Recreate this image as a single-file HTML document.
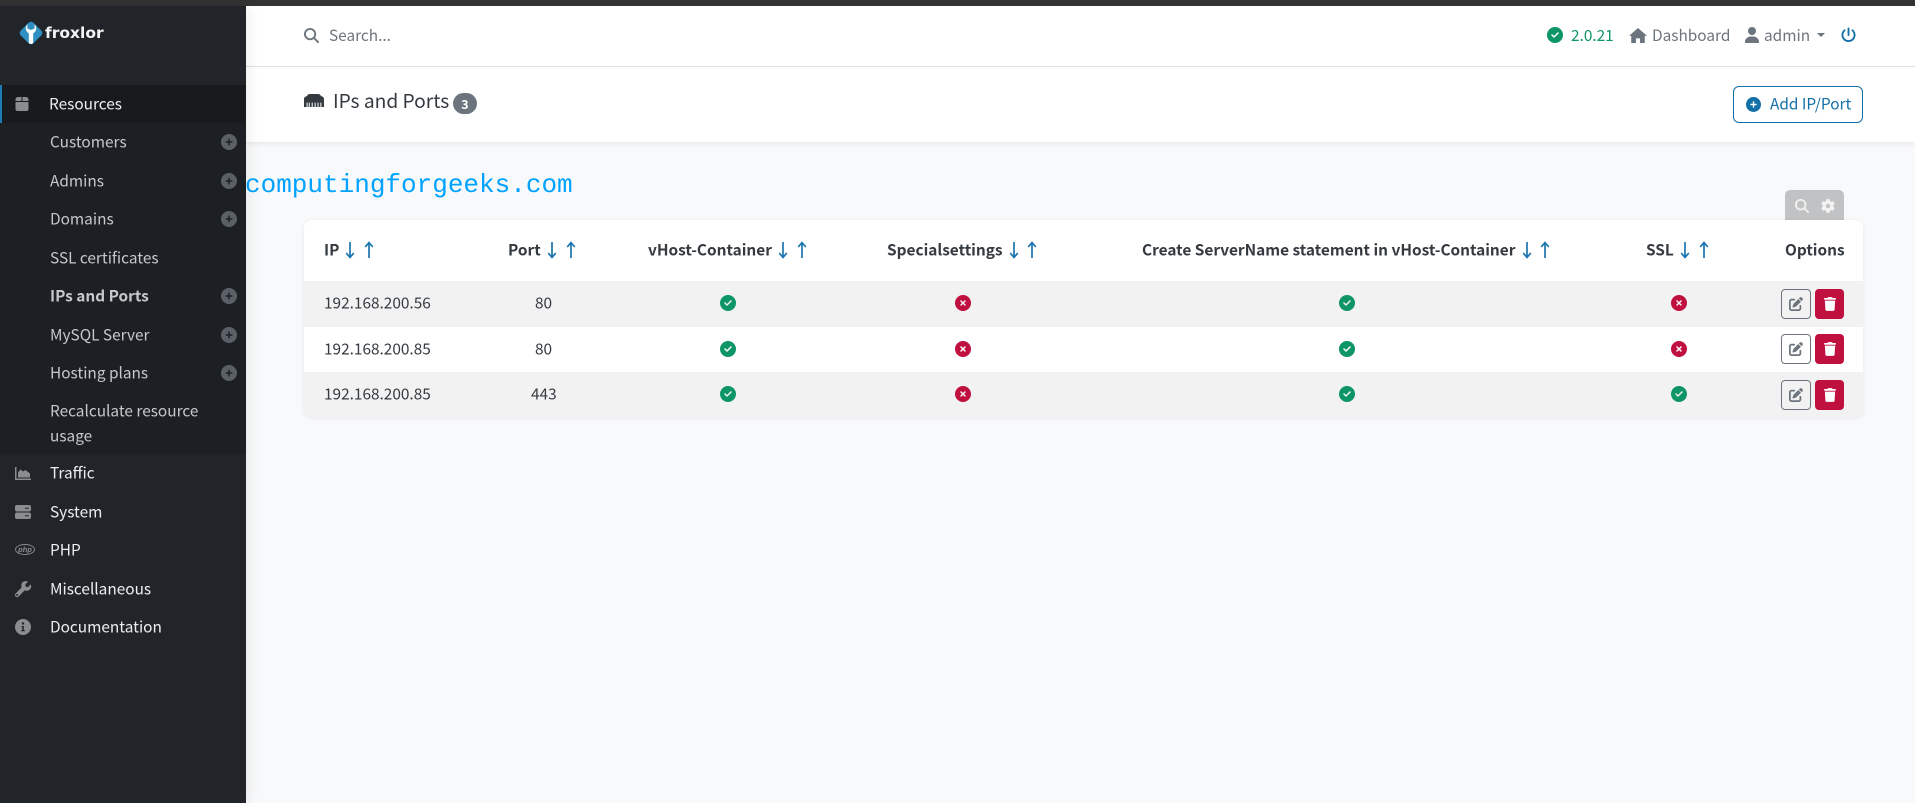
<!DOCTYPE html>
<html lang="en"><head><meta charset="utf-8"><title>IPs and Ports - Froxlor</title>
<style>
*{box-sizing:border-box}
html,body{margin:0;padding:0;width:1915px;height:803px;overflow:hidden;background:#f8f9fa}
body{position:relative;font-family:"Noto Sans CJK JP","Liberation Sans",sans-serif;font-size:15.4px;color:#212529}
.a{position:absolute}
.t{position:absolute;white-space:nowrap;line-height:24px;height:24px}
svg.i{position:absolute;display:block;overflow:visible}
.side{position:absolute;left:0;top:6px;width:246px;height:797px;background:#212529;box-shadow:0 0 14px rgba(0,0,0,.1)}
.sub{color:#c6c8ca;transform:translateY(.5px)}
.main{color:#eceeef;transform:translateY(.5px)}
.th{font-weight:700;color:#343a40;transform:translateY(.5px)}
.td{color:#343a40;transform:translateY(.5px)}
.ed{position:absolute;left:1781px;width:30px;height:30px;border:1px solid #6c757d;border-radius:4px}
.de{position:absolute;left:1815px;width:29px;height:30px;background:#bf1040;border-radius:4px}
</style></head><body>
<svg width="0" height="0" style="position:absolute"><defs>
<symbol id="chk" viewBox="0 0 512 512"><path d="M256 512A256 256 0 1 0 256 0a256 256 0 1 0 0 512zM369 209L241 337c-9.4 9.4-24.6 9.4-33.9 0l-64-64c-9.4-9.4-9.4-24.6 0-33.9s24.6-9.4 33.9 0l47 47L335 175c9.4-9.4 24.6-9.4 33.9 0s9.4 24.6 0 33.9z"/></symbol>
<symbol id="xm" viewBox="0 0 512 512"><path d="M256 512A256 256 0 1 0 256 0a256 256 0 1 0 0 512zM175 175c9.4-9.4 24.6-9.4 33.9 0l47 47 47-47c9.4-9.4 24.6-9.4 33.9 0s9.4 24.6 0 33.9l-47 47 47 47c9.4 9.4 9.4 24.6 0 33.9s-24.6 9.4-33.9 0l-47-47-47 47c-9.4 9.4-24.6 9.4-33.9 0s-9.4-24.6 0-33.9l47-47-47-47c-9.4-9.4-9.4-24.6 0-33.9z"/></symbol>
<symbol id="pl" viewBox="0 0 512 512"><path d="M256 512A256 256 0 1 0 256 0a256 256 0 1 0 0 512zM232 344V280H168c-13.3 0-24-10.7-24-24s10.7-24 24-24h64V168c0-13.3 10.7-24 24-24s24 10.7 24 24v64h64c13.3 0 24 10.7 24 24s-10.7 24-24 24H280v64c0 13.3-10.7 24-24 24s-24-10.7-24-24z"/></symbol>
<symbol id="sr" viewBox="0 0 512 512"><path d="M416 208c0 45.9-14.9 88.3-40 122.7L502.6 457.4c12.5 12.5 12.5 32.8 0 45.3s-32.8 12.5-45.3 0L330.7 376c-34.4 25.2-76.8 40-122.7 40C93.1 416 0 322.9 0 208S93.1 0 208 0S416 93.1 416 208zM208 352a144 144 0 1 0 0-288 144 144 0 1 0 0 288z"/></symbol>
<symbol id="ed" viewBox="0 0 512 512"><path d="M471.6 21.7c-21.9-21.9-57.3-21.9-79.2 0L362.3 51.7l97.9 97.9 30.1-30.1c21.9-21.9 21.9-57.3 0-79.2L471.6 21.7zm-299.2 220c-6.1 6.1-10.8 13.6-13.5 21.9l-29.6 88.8c-2.9 8.6-.6 18.1 5.8 24.6s15.9 8.7 24.6 5.8l88.8-29.6c8.2-2.7 15.7-7.4 21.9-13.5L437.7 172.3 339.7 74.3 172.4 241.7zM96 64C43 64 0 107 0 160V416c0 53 43 96 96 96H352c53 0 96-43 96-96V320c0-17.7-14.3-32-32-32s-32 14.3-32 32v96c0 17.7-14.3 32-32 32H96c-17.7 0-32-14.3-32-32V160c0-17.7 14.3-32 32-32h96c17.7 0 32-14.3 32-32s-14.3-32-32-32H96z"/></symbol>
<symbol id="tr" viewBox="0 0 448 512"><path d="M135.2 17.7L128 32H32C14.3 32 0 46.3 0 64S14.3 96 32 96H416c17.7 0 32-14.3 32-32s-14.3-32-32-32H320l-7.2-14.3C307.4 6.8 296.3 0 284.2 0H163.8c-12.1 0-23.2 6.8-28.6 17.7zM416 128H32L53.2 467c1.6 25.3 22.6 45 47.9 45H346.9c25.3 0 46.3-19.7 47.9-45L416 128z"/></symbol>
<symbol id="dn" viewBox="0 0 10 18"><path d="M5 1V16M1.2 12L5 16.4L8.8 12" fill="none" stroke="#1b76b0" stroke-width="1.7"/></symbol>
<symbol id="up" viewBox="0 0 10 18"><path d="M5 17V2M1.2 6L5 1.6L8.8 6" fill="none" stroke="#1b76b0" stroke-width="1.7"/></symbol>
</defs></svg>

<div class="a" style="left:0;top:0;width:1915px;height:6px;background:#333"></div>

<!-- header -->
<div class="a" style="left:246px;top:6px;width:1669px;height:61px;background:#fff;border-bottom:1px solid #e2e1ea"></div>
<div class="a" style="left:246px;top:67px;width:1669px;height:75px;background:#fff;box-shadow:0 2px 5px rgba(0,0,0,.07)"></div>

<svg class="i" style="left:304px;top:28px;fill:#6c757d" width="15" height="15"><use href="#sr"/></svg>
<div class="t" style="left:329px;top:23px;color:#6c757d">Search...</div>

<svg class="i" style="left:1547px;top:27px;fill:#0d9566" width="16" height="16"><use href="#chk"/></svg>
<div class="t" style="left:1571px;top:23px;color:#0d9566">2.0.21</div>
<svg class="i" style="left:1629px;top:28px;fill:#6c757d" width="18" height="15" viewBox="0 0 576 480"><path d="M288 0L0 250h72v230h150V330h132v150h150V250h72z"/></svg>
<div class="t" style="left:1652px;top:23px;color:#6c757d">Dashboard</div>
<svg class="i" style="left:1745px;top:27px;fill:#6c757d" width="14" height="16" viewBox="0 0 448 512"><path d="M224 256A128 128 0 1 0 224 0a128 128 0 1 0 0 256zm-45.7 48C79.8 304 0 383.8 0 482.3C0 498.7 13.3 512 29.7 512H418.3c16.4 0 29.7-13.3 29.7-29.7C448 383.8 368.2 304 269.7 304H178.3z"/></svg>
<div class="t" style="left:1764px;top:23px;color:#6c757d">admin</div>
<div class="a" style="left:1817px;top:33px;width:0;height:0;border-left:4px solid transparent;border-right:4px solid transparent;border-top:4px solid #6c757d"></div>
<svg class="i" style="left:1841px;top:27px;fill:#1470a8" width="15" height="16" viewBox="0 0 512 512"><path d="M288 32c0-17.7-14.3-32-32-32s-32 14.3-32 32V256c0 17.7 14.3 32 32 32s32-14.3 32-32V32zM143.5 120.6c13.6-11.3 15.4-31.5 4.1-45.1s-31.5-15.4-45.1-4.1C49.7 115.4 16 181.8 16 256c0 132.5 107.5 240 240 240s240-107.5 240-240c0-74.2-33.8-140.6-86.6-184.6c-13.6-11.3-33.8-9.4-45.1 4.1s-9.4 33.8 4.1 45.1c38.9 32.3 63.5 81 63.5 135.4c0 97.2-78.8 176-176 176s-176-78.8-176-176c0-54.4 24.7-103.1 63.5-135.4z"/></svg>

<!-- title -->
<svg class="i" style="left:304px;top:94px;fill:#343a40" width="20" height="13" viewBox="0 0 20 15" preserveAspectRatio="none"><path d="M6 0h8c1.500 0 2.500.8 3 2.500 1.800.3 3 1.500 3 3.500v9h-2.600V10h-1v5h-1.900V10h-1v5h-1.900V10h-1v5H8.700V10h-1v5H5.800V10h-1v5H3.600V10h-1v5H0V6c0-2 1.200-3.200 3-3.500C3.500.8 4.500 0 6 0z"/></svg>
<div class="t" style="left:333px;top:86px;font-size:19.2px;line-height:28px;height:28px;color:#343a40">IPs and Ports</div>
<div class="a" style="left:453px;top:93px;width:24px;height:21px;border-radius:11px;background:#6c757d;color:#fff;font-size:12.5px;font-weight:700;text-align:center;line-height:21px">3</div>

<div class="a" style="left:1733px;top:86px;width:130px;height:37px;border:1px solid #1470a8;border-radius:6px;background:#fff"></div>
<svg class="i" style="left:1746px;top:97px;fill:#1470a8" width="15" height="15"><use href="#pl"/></svg>
<div class="t" style="left:1770px;top:91px;color:#1470a8;transform:translateY(.5px)">Add IP/Port</div>

<div class="t" style="left:245px;top:169px;font-family:'Liberation Mono',monospace;font-size:26px;line-height:32px;height:32px;color:#00a2ff">computingforgeeks.com</div>

<!-- tools -->
<div class="a" style="left:1785px;top:190px;width:59px;height:34px;background:#c1c2c3;border-radius:5px 5px 0 0"></div>
<svg class="i" style="left:1795px;top:199px;fill:#f3f3f3" width="14" height="14"><use href="#sr"/></svg>
<svg class="i" style="left:1821px;top:199px;fill:#f3f3f3" width="14" height="14" viewBox="0 0 512 512"><path d="M495.9 166.6c3.2 8.7 .5 18.4-6.400 24.600l-43.300 39.400c1.100 8.300 1.700 16.800 1.700 25.400s-.6 17.100-1.700 25.400l43.300 39.400c6.900 6.200 9.600 15.900 6.400 24.600c-4.400 11.900-9.700 23.300-15.800 34.300l-4.700 8.100c-6.600 11-14 21.400-22.100 31.200c-5.900 7.200-15.700 9.600-24.500 6.800l-55.700-17.700c-13.400 10.300-28.200 18.900-44 25.400l-12.500 57.100c-2 9.100-9 16.300-18.200 17.800c-13.800 2.300-28 3.500-42.500 3.500s-28.700-1.200-42.500-3.500c-9.200-1.500-16.200-8.700-18.200-17.800l-12.500-57.100c-15.800-6.500-30.600-15.100-44-25.400L83.100 425.900c-8.800 2.800-18.600 .3-24.500-6.800c-8.100-9.800-15.500-20.200-22.100-31.200l-4.700-8.100c-6.100-11-11.400-22.400-15.800-34.300c-3.200-8.700-.5-18.400 6.400-24.600l43.300-39.400C64.600 273.100 64 264.600 64 256s.6-17.100 1.700-25.400L22.400 191.200c-6.900-6.200-9.600-15.900-6.400-24.600c4.400-11.900 9.700-23.300 15.800-34.300l4.700-8.100c6.600-11 14-21.400 22.100-31.200c5.900-7.200 15.700-9.600 24.500-6.800l55.700 17.700c13.400-10.300 28.200-18.900 44-25.400l12.500-57.100c2-9.100 9-16.300 18.200-17.800C227.300 1.200 241.500 0 256 0s28.700 1.200 42.500 3.500c9.200 1.500 16.200 8.700 18.200 17.800l12.500 57.100c15.800 6.500 30.600 15.100 44 25.400l55.700-17.700c8.800-2.800 18.600-.3 24.500 6.800c8.100 9.800 15.500 20.200 22.100 31.200l4.700 8.100c6.100 11 11.400 22.400 15.800 34.300zM256 336a80 80 0 1 0 0-160 80 80 0 1 0 0 160z"/></svg>

<!-- table -->
<div class="a" style="left:304px;top:220px;width:1559px;height:197px;background:#fff;border-radius:8px;box-shadow:0 1px 4px rgba(0,0,0,.08);overflow:hidden">
  <div class="a" style="left:0;top:61px;width:1559px;height:46px;background:#f2f2f2"></div>
  <div class="a" style="left:0;top:152px;width:1559px;height:45px;background:#f2f2f2"></div>
</div>

<div class="t th" style="left:324px;top:237px">IP</div>
<svg class="i" style="left:345px;top:241px" width="10" height="18"><use href="#dn"/></svg>
<svg class="i" style="left:364px;top:241px" width="10" height="18"><use href="#up"/></svg>
<div class="t th" style="left:508px;top:237px">Port</div>
<svg class="i" style="left:547px;top:241px" width="10" height="18"><use href="#dn"/></svg>
<svg class="i" style="left:566px;top:241px" width="10" height="18"><use href="#up"/></svg>
<div class="t th" style="left:648px;top:237px">vHost-Container</div>
<svg class="i" style="left:778px;top:241px" width="10" height="18"><use href="#dn"/></svg>
<svg class="i" style="left:797px;top:241px" width="10" height="18"><use href="#up"/></svg>
<div class="t th" style="left:887px;top:237px">Specialsettings</div>
<svg class="i" style="left:1009px;top:241px" width="10" height="18"><use href="#dn"/></svg>
<svg class="i" style="left:1027px;top:241px" width="10" height="18"><use href="#up"/></svg>
<div class="t th" style="left:1142px;top:237px">Create ServerName statement in vHost-Container</div>
<svg class="i" style="left:1522px;top:241px" width="10" height="18"><use href="#dn"/></svg>
<svg class="i" style="left:1540px;top:241px" width="10" height="18"><use href="#up"/></svg>
<div class="t th" style="left:1646px;top:237px">SSL</div>
<svg class="i" style="left:1680px;top:241px" width="10" height="18"><use href="#dn"/></svg>
<svg class="i" style="left:1699px;top:241px" width="10" height="18"><use href="#up"/></svg>
<div class="t th" style="left:1785px;top:237px">Options</div>

<!-- row 1 -->
<div class="t td" style="left:324px;top:290px">192.168.200.56</div>
<div class="t td" style="left:535px;top:290px">80</div>
<svg class="i" style="left:720px;top:295px;fill:#0d9566" width="16" height="16"><use href="#chk"/></svg>
<svg class="i" style="left:955px;top:295px;fill:#bf1040" width="16" height="16"><use href="#xm"/></svg>
<svg class="i" style="left:1339px;top:295px;fill:#0d9566" width="16" height="16"><use href="#chk"/></svg>
<svg class="i" style="left:1671px;top:295px;fill:#bf1040" width="16" height="16"><use href="#xm"/></svg>
<div class="ed" style="top:289px"></div><svg class="i" style="left:1789px;top:297px;fill:#6c757d" width="14" height="14"><use href="#ed"/></svg>
<div class="de" style="top:289px"></div><svg class="i" style="left:1824px;top:297px;fill:#fff" width="12" height="14"><use href="#tr"/></svg>

<!-- row 2 -->
<div class="t td" style="left:324px;top:336px">192.168.200.85</div>
<div class="t td" style="left:535px;top:336px">80</div>
<svg class="i" style="left:720px;top:341px;fill:#0d9566" width="16" height="16"><use href="#chk"/></svg>
<svg class="i" style="left:955px;top:341px;fill:#bf1040" width="16" height="16"><use href="#xm"/></svg>
<svg class="i" style="left:1339px;top:341px;fill:#0d9566" width="16" height="16"><use href="#chk"/></svg>
<svg class="i" style="left:1671px;top:341px;fill:#bf1040" width="16" height="16"><use href="#xm"/></svg>
<div class="ed" style="top:334px"></div><svg class="i" style="left:1789px;top:342px;fill:#6c757d" width="14" height="14"><use href="#ed"/></svg>
<div class="de" style="top:334px"></div><svg class="i" style="left:1824px;top:342px;fill:#fff" width="12" height="14"><use href="#tr"/></svg>

<!-- row 3 -->
<div class="t td" style="left:324px;top:381px">192.168.200.85</div>
<div class="t td" style="left:531px;top:381px">443</div>
<svg class="i" style="left:720px;top:386px;fill:#0d9566" width="16" height="16"><use href="#chk"/></svg>
<svg class="i" style="left:955px;top:386px;fill:#bf1040" width="16" height="16"><use href="#xm"/></svg>
<svg class="i" style="left:1339px;top:386px;fill:#0d9566" width="16" height="16"><use href="#chk"/></svg>
<svg class="i" style="left:1671px;top:386px;fill:#0d9566" width="16" height="16"><use href="#chk"/></svg>
<div class="ed" style="top:380px"></div><svg class="i" style="left:1789px;top:388px;fill:#6c757d" width="14" height="14"><use href="#ed"/></svg>
<div class="de" style="top:380px"></div><svg class="i" style="left:1824px;top:388px;fill:#fff" width="12" height="14"><use href="#tr"/></svg>

<!-- sidebar -->
<div class="side"></div>
<div class="a" style="left:0;top:85px;width:246px;height:38px;background:#181b1e"></div>
<div class="a" style="left:0;top:85px;width:2px;height:38px;background:#1d7ab5"></div>
<div class="a" style="left:0;top:123px;width:246px;height:331px;background:#1c1f23"></div>

<svg class="i" style="left:19px;top:21px" width="24" height="24" viewBox="0 0 24 24"><rect x="3" y="3" width="18" height="18" rx="3.500" transform="rotate(45 12 12)" fill="#2e8fc1"/><path d="M8.400 3.200A6 6 0 0 0 9.800 12.500V21.500c0 1.900 4.400 1.900 4.400 0V12.500A6 6 0 0 0 15.600 3.200V7.500L12 9 8.400 7.500z" fill="#fff"/></svg>
<div class="t" style="left:45px;top:21px;font-family:'DejaVu Sans',sans-serif;font-weight:700;font-size:15.500px;color:#f4f4f4">froxlor</div>

<svg class="i" style="left:15px;top:97px;fill:#8a8c8e" width="14" height="14" viewBox="0 0 13 14"><path d="M2.500 0H6v4H0V2.500A2.500 2.500 0 0 1 2.500 0zM7 0h3.500A2.500 2.500 0 0 1 13 2.500V4H7zM0 5h13v7a2 2 0 0 1-2 2H2a2 2 0 0 1-2-2z"/></svg>
<div class="t main" style="left:49px;top:91px">Resources</div>

<div class="t sub" style="left:50px;top:129px">Customers</div>
<div class="t sub" style="left:50px;top:168px">Admins</div>
<div class="t sub" style="left:50px;top:206px">Domains</div>
<div class="t sub" style="left:50px;top:245px">SSL certificates</div>
<div class="t sub" style="left:50px;top:283px;font-weight:700">IPs and Ports</div>
<div class="t sub" style="left:50px;top:322px">MySQL Server</div>
<div class="t sub" style="left:50px;top:360px">Hosting plans</div>
<div class="t sub" style="left:50px;top:398px">Recalculate resource</div>
<div class="t sub" style="left:50px;top:423px">usage</div>

<svg class="i" style="left:221px;top:134px;fill:#5b6067" width="16" height="16"><use href="#pl"/></svg>
<svg class="i" style="left:221px;top:173px;fill:#5b6067" width="16" height="16"><use href="#pl"/></svg>
<svg class="i" style="left:221px;top:211px;fill:#5b6067" width="16" height="16"><use href="#pl"/></svg>
<svg class="i" style="left:221px;top:288px;fill:#5b6067" width="16" height="16"><use href="#pl"/></svg>
<svg class="i" style="left:221px;top:327px;fill:#5b6067" width="16" height="16"><use href="#pl"/></svg>
<svg class="i" style="left:221px;top:365px;fill:#5b6067" width="16" height="16"><use href="#pl"/></svg>

<svg class="i" style="left:15px;top:467px;fill:#8a8c8e" width="16" height="13" viewBox="0 0 16 13"><path d="M0 0h1.500v11.500H16V13H0z"/><path d="M3 10.500V5.500L5.500 2.500 8 4.500 10.500 3 15 6.500v4z"/></svg>
<div class="t main" style="left:50px;top:460px">Traffic</div>
<svg class="i" style="left:15px;top:505px;fill:#8a8c8e" width="16" height="14" viewBox="0 0 16 14"><path fill-rule="evenodd" d="M2 0h12a2 2 0 0 1 2 2v2.500a2 2 0 0 1-2 2H2a2 2 0 0 1-2-2V2a2 2 0 0 1 2-2zM10 2.700v1h4v-1zM2 7.500h12a2 2 0 0 1 2 2V12a2 2 0 0 1-2 2H2a2 2 0 0 1-2-2V9.500a2 2 0 0 1 2-2zM10 10.200v1h4v-1z"/></svg>
<div class="t main" style="left:50px;top:499px">System</div>
<svg class="i" style="left:15px;top:544px" width="20" height="11" viewBox="0 0 20 11"><ellipse cx="10" cy="5.500" rx="9.500" ry="5" fill="none" stroke="#8a8c8e" stroke-width=".9"/><text x="10" y="7.800" text-anchor="middle" font-family="Liberation Sans,sans-serif" font-style="italic" font-weight="700" font-size="7.500" fill="#8a8c8e">php</text></svg>
<div class="t main" style="left:50px;top:537px">PHP</div>
<svg class="i" style="left:15px;top:581px;fill:#8a8c8e" width="16" height="16" viewBox="0 0 16 16"><path d="M15.700 3.400l-2.700 2.700-2.300-.4-.4-2.300L13 .7C10.800-.4 8 .1 6.900 2 6 3.500 6.100 5 6.700 6.400L.6 12.500a2.100 2.100 0 0 0 3 3l6.100-6.100c1.400.6 3 .6 4.500-.4 1.900-1.200 2.500-3.500 1.500-5.600zM2.100 14.900a1 1 0 1 1 0-2 1 1 0 0 1 0 2z"/></svg>
<div class="t main" style="left:50px;top:576px">Miscellaneous</div>
<svg class="i" style="left:15px;top:619px" width="16" height="16" viewBox="0 0 16 16"><circle cx="8" cy="8" r="8" fill="#8a8c8e"/><circle cx="8" cy="4.500" r="1.200" fill="#212529"/><path d="M6.500 7h2.300v4h1v1.300H6.300V11h1V8.300h-.8z" fill="#212529"/></svg>
<div class="t main" style="left:50px;top:614px">Documentation</div>
</body></html>
